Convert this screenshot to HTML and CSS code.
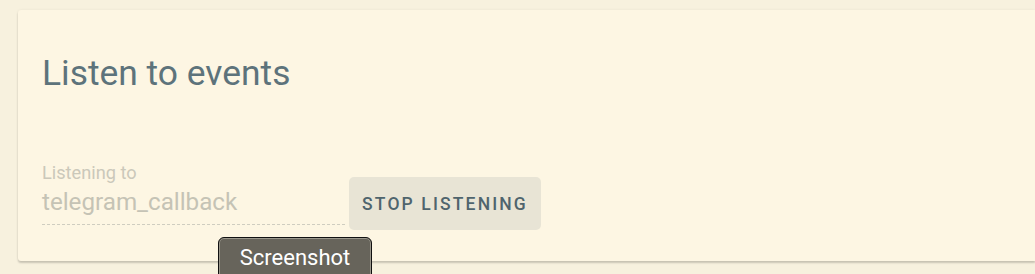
FILE: index.html
```html
<!DOCTYPE html>
<html>
<head>
<meta charset="utf-8">
<link rel="stylesheet" href="styles.css">
</head>
<body>
<div class="card">
  <h2 class="title">Listen to events</h2>
  <div class="row">
    <div class="field">
      <label class="label">Listening to</label>
      <div class="input">telegram_callback</div>
    </div>
    <button class="btn">STOP LISTENING</button>
  </div>
</div>
<div class="tooltip">Screenshot</div>
</body>
</html>
```
FILE: styles.css
```css
html, body {
  margin: 0;
  padding: 0;
  background: #f7f1de;
  font-family: Roboto, "Noto Sans", sans-serif;
  overflow: hidden;
  height: 274px;
}
body {
  padding: 10px 0 0 18px;
  position: relative;
}
.card {
  background: #fdf6e3;
  height: 251px;
  box-sizing: border-box;
  padding: 43px 24px 0 24px;
  border-radius: 3px 0 0 3px;
  box-shadow: 0 2px 2px rgba(0,0,0,0.18), 0 0 3px rgba(0,0,0,0.06);
}
.title {
  margin: 0;
  font-weight: 400;
  font-size: 35.4px;
  line-height: 40px;
  color: #5d737b;
}
.row {
  display: flex;
  align-items: flex-start;
  margin-top: 70px;
}
.field {
  width: 303px;
  display: flex;
  flex-direction: column;
  border-bottom: 1px dashed #cfcdc0;
  padding-bottom: 8px;
}
.label {
  font-size: 18.2px;
  line-height: 20px;
  color: #cbc8ba;
}
.input {
  font-size: 24.2px;
  line-height: 28px;
  margin-top: 5px;
  color: #c5c3b5;
}
.btn {
  margin-left: 4px;
  margin-top: 14px;
  height: 53px;
  width: 192px;
  border: none;
  border-radius: 5px;
  background: #e8e4d5;
  color: #4f646d;
  font-family: Roboto, sans-serif;
  font-weight: 500;
  font-size: 17.5px;
  letter-spacing: 2.14px;
  padding: 0;
}
.tooltip {
  position: absolute;
  left: 218px;
  top: 237px;
  width: 154px;
  height: 40px;
  box-sizing: border-box;
  background: #67645b;
  border: 1px solid #111;
  box-shadow: inset 0 0 0 1px #9a978c;
  border-radius: 6px 6px 0 0;
  color: #fff;
  font-size: 22px;
  text-align: center;
  padding-top: 7px;
}
```
